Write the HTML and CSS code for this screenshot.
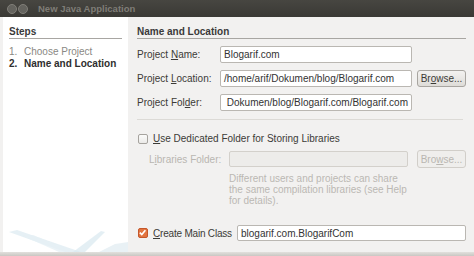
FILE: index.html
```html
<!DOCTYPE html>
<html lang="en">
<head>
  <meta charset="UTF-8">
  <title>New Java Application</title>
  <link rel="stylesheet" href="styles.css">
</head>
<body>
  <div class="titlebar">
    <span class="win-btn"></span>
    <span class="win-btn"></span>
    <span class="title">New Java Application</span>
  </div>

  <div class="window">
    <div class="steps">
      <div class="steps-title">Steps</div>
      <ol class="step-list">
        <li><span class="num">1.</span>Choose Project</li>
        <li class="current"><span class="num">2.</span>Name and Location</li>
      </ol>
      <svg class="steps-art" width="125" height="26" viewBox="0 0 125 26">
        <polygon points="6,6 14,4 78,26 62,26" fill="#dceaf1" opacity="0.7"/>
        <polygon points="20,10 30,9 70,26 56,26" fill="#e6f0f5" opacity="0.8"/>
        <polygon points="70,26 98,5 102,6 82,26" fill="#d9e8f0" opacity="0.7"/>
        <polygon points="96,26 112,18 125,16 125,26" fill="#e4eef3" opacity="0.8"/>
      </svg>
    </div>

    <div class="panel">
      <div class="panel-title">Name and Location</div>

      <div class="form">
        <label class="label">Project <u>N</u>ame:</label>
        <div class="input">Blogarif.com</div>
        <div></div>

        <label class="label">Project <u>L</u>ocation:</label>
        <div class="input">/home/arif/Dokumen/blog/Blogarif.com</div>
        <button class="btn">Br<u>o</u>wse...</button>

        <label class="label">Project Fol<u>d</u>er:</label>
        <div class="input scrolled"><span>Dokumen/blog/Blogarif.com/Blogarif.com</span></div>
        <div></div>
      </div>

      <div class="separator"></div>

      <div class="check-row">
        <span class="checkbox"></span>
        <span><u>U</u>se Dedicated Folder for Storing Libraries</span>
      </div>

      <div class="lib-row">
        <label class="label disabled">L<u>i</u>braries Folder:</label>
        <div class="input disabled"></div>
        <button class="btn disabled">Bro<u>w</u>se...</button>
      </div>

      <p class="hint">Different users and projects can share<br>the same compilation libraries (see Help<br>for details).</p>

      <div class="main-row">
        <span class="checkbox checked">
          <svg width="9" height="9" viewBox="0 0 9 9"><path d="M1.8 4.6 L3.8 6.6 L7.4 2.2" fill="none" stroke="#fff" stroke-width="1.6"/></svg>
        </span>
        <span class="main-label"><u>C</u>reate Main Class</span>
        <div class="input grow">blogarif.com.BlogarifCom</div>
      </div>
    </div>
  </div>

  <div class="footer"></div>
</body>
</html>
```

FILE: styles.css
```css
* {
  margin: 0;
  padding: 0;
  box-sizing: border-box;
}

body {
  width: 474px;
  height: 256px;
  overflow: hidden;
  font-family: "Liberation Sans", Arial, sans-serif;
  font-size: 10px;
  color: #3c3b37;
  background: #f2f1f0;
}

u {
  text-decoration: underline;
  text-underline-offset: 1px;
}

.titlebar {
  height: 17px;
  display: flex;
  align-items: center;
  padding-left: 7px;
  background: linear-gradient(#474641, #3a3935);
}

.win-btn {
  width: 10px;
  height: 10px;
  border-radius: 50%;
  margin-right: 1px;
  background: #64635e;
  border: 1px solid #807e78;
}

.title {
  margin-left: 9px;
  font-size: 9.5px;
  font-weight: bold;
  color: #7f7d77;
}

.window {
  height: 235px;
  display: flex;
}

.steps {
  position: relative;
  flex: none;
  width: 125px;
  margin-left: 3px;
  background: #fff;
  padding: 8px 6px 0 6px;
}

.steps-title {
  font-weight: bold;
  color: #3a3a3a;
  line-height: 13px;
  border-bottom: 1px solid #a8a6a2;
}

.step-list {
  list-style: none;
  margin-top: 7px;
}

.step-list li {
  line-height: 12px;
  color: #8a8884;
}

.step-list li.current {
  font-weight: bold;
  color: #2e2e2e;
}

.num {
  display: inline-block;
  width: 15px;
}

.steps-art {
  position: absolute;
  left: 0;
  bottom: 0;
}

.panel {
  flex: 1;
  display: flex;
  flex-direction: column;
  padding: 8px 8px 11px 9px;
}

.panel-title {
  font-weight: bold;
  color: #3a3a3a;
  line-height: 13px;
  border-bottom: 1px solid #a8a6a2;
}

.form {
  display: grid;
  grid-template-columns: 83px 192px 54px;
  grid-auto-rows: 17px;
  row-gap: 7px;
  margin-top: 7px;
}

.label {
  display: block;
  line-height: 17px;
  white-space: nowrap;
}

.input {
  display: flex;
  align-items: center;
  height: 17px;
  padding: 0 3px;
  background: #fff;
  border: 1px solid #bab7b2;
  border-radius: 2px;
  color: #333;
  white-space: nowrap;
  overflow: hidden;
}

.input.scrolled {
  justify-content: flex-end;
}

.btn {
  height: 17px;
  font-family: inherit;
  font-size: 10px;
  color: #3c3b37;
  background: linear-gradient(#f3f2f0, #dedcd8);
  border: 1px solid #a8a5a0;
  border-radius: 3px;
}

.form .btn {
  margin-left: 5px;
}

.separator {
  margin-top: 8px;
  margin-right: 3px;
  border-top: 1px solid #dcdad6;
}

.check-row {
  display: flex;
  align-items: center;
  margin-top: 12px;
  height: 13px;
  padding-left: 1px;
}

.checkbox {
  display: inline-flex;
  flex: none;
  width: 10px;
  height: 10px;
  margin-right: 5px;
  border: 1px solid #a6a39e;
  border-radius: 2px;
  background: linear-gradient(#fbfbfa, #ebeae8);
}

.checkbox.checked {
  border-color: #c5572a;
  background: #e2743f;
}

.checkbox.checked svg {
  margin: -1px 0 0 -1px;
}

.lib-row {
  display: flex;
  align-items: center;
  margin-top: 5px;
  height: 18px;
  padding-left: 12px;
}

.lib-row .label {
  flex: none;
  width: 80px;
}

.lib-row .input {
  flex: none;
  width: 179px;
  height: 16px;
}

.lib-row .btn {
  flex: none;
  width: 49px;
  height: 18px;
  margin-left: 9px;
}

.disabled {
  color: #b9b6b1;
}

.input.disabled {
  background: #edecea;
  border-color: #d3d0cb;
}

.btn.disabled {
  background: #efeeec;
  border-color: #d1cec9;
}

.hint {
  margin: 5px 0 0 92px;
  line-height: 11px;
  color: #bbb8b3;
}

.main-row {
  display: flex;
  align-items: center;
  margin-top: auto;
  padding-left: 1px;
}

.main-label {
  flex: none;
  width: 84px;
  letter-spacing: -0.2px;
  white-space: nowrap;
}

.input.grow {
  flex: 1;
  height: 16px;
}

.footer {
  height: 4px;
  background: linear-gradient(#e2e0dd, #c9c7c3);
}
```
